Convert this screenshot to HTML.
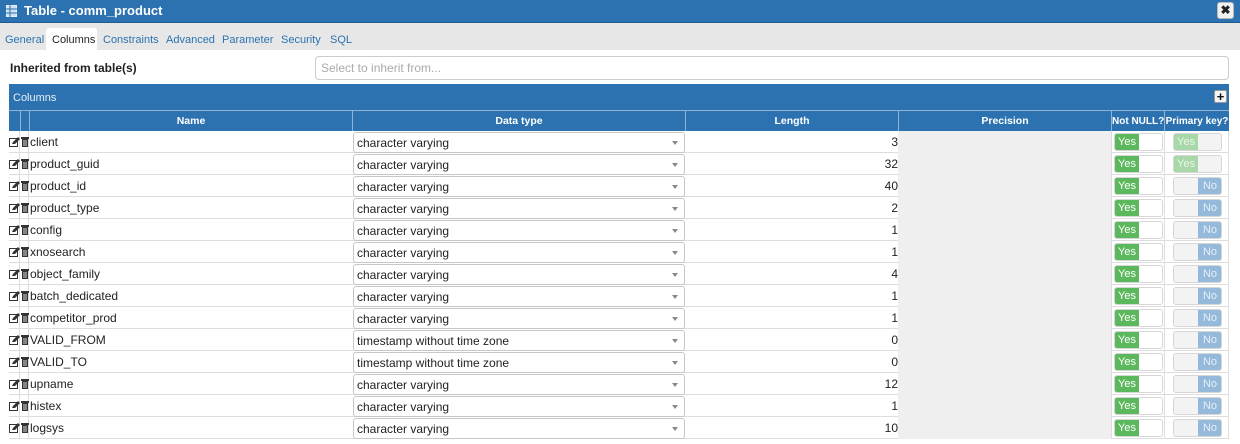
<!DOCTYPE html>
<html><head><style>
*{box-sizing:border-box;margin:0;padding:0}
body{width:1240px;height:444px;overflow:hidden;background:#fff;font-family:"Liberation Sans",Arial,sans-serif;font-size:12px;color:#333;position:relative}
.abs{position:absolute}
.title{left:0;top:0;width:1240px;height:23px;background:#2c72b0;color:#fff;font-weight:bold;font-size:13px;line-height:22px;padding-left:24px;border-bottom:1px solid #1f5a90}
.tabs{left:0;top:23px;width:1240px;height:27px;background:#e7e7e7}
.tab{position:absolute;top:5px;height:22px;font-size:11px;color:#2c72b0;line-height:24px;white-space:nowrap}
.tab.act{background:#fff;color:#222;border-radius:3px 3px 0 0;padding:0 6px;width:51px}
.row{position:absolute;left:9px;width:1220px;height:22px;border-bottom:1px solid #ddd}
.c{position:absolute;top:0;height:22px;line-height:23px}
.sel{position:absolute;left:344px;top:1px;width:332px;height:21px;border:1px solid #c7c7c7;border-radius:3px;background:#fff;padding-left:3px;line-height:20px;font-size:12px;color:#222}
.sel:after{content:"";position:absolute;right:6px;top:8px;border-left:3px solid transparent;border-right:3px solid transparent;border-top:4px solid #888}
.sw{position:absolute;top:2px;width:49px;height:18px;border:1px solid #d6d6d6;border-radius:3px;background:#fff;overflow:hidden;font-size:11px;line-height:16px;color:#fff}
.sw span{position:absolute;top:0;width:24px;height:16px;text-align:center}
.hd{position:absolute;top:0;height:20px;border-left:1px solid #8fb3d5;text-align:center;white-space:nowrap;overflow:hidden}
</style></head><body>
<div class="abs title">Table - comm_product</div>
<svg class="abs" style="left:6px;top:5px" width="11" height="12" viewBox="0 0 11 12"><rect x="0.5" y="0.5" width="10" height="11" fill="#cfe0f0" stroke="#e8f0f8"/><path d="M0 4h11M0 8h11M4 0v12" stroke="#2c72b0" stroke-width="1"/></svg>
<div class="abs" style="left:1217px;top:2px;width:17px;height:17px;background:#f1f1f1;border:1px solid #bbb;border-radius:3px;text-align:center;line-height:15px;font-size:12px;font-weight:bold;color:#222">✖</div>
<div class="abs tabs">
<div class="tab" style="left:5px">General</div>
<div class="tab act" style="left:46px">Columns</div>
<div class="tab" style="left:103px">Constraints</div>
<div class="tab" style="left:166px">Advanced</div>
<div class="tab" style="left:222px">Parameter</div>
<div class="tab" style="left:281px">Security</div>
<div class="tab" style="left:330px">SQL</div>
</div>
<div class="abs" style="left:10px;top:61px;font-weight:bold;font-size:12px;color:#222">Inherited from table(s)</div>
<div class="abs" style="left:315px;top:56px;width:914px;height:24px;border:1px solid #ccc;border-radius:4px;color:#aaa;padding-left:5px;line-height:23px">Select to inherit from...</div>
<div class="abs" style="left:9px;top:84px;width:1220px;height:26px;background:#2c72b0;color:#e8f0f8;line-height:28px;padding-left:4px;font-size:11px">Columns</div>
<div class="abs" style="left:1214px;top:90px;width:13px;height:13px;background:#f4f4f4;border:1px solid #999;border-radius:2px;text-align:center;line-height:11px;font-weight:bold;color:#111;font-size:13px">+</div>
<div class="abs" style="left:9px;top:110px;width:1220px;height:21px;background:#2c72b0;color:#fff;font-weight:bold;font-size:10.5px;line-height:21px;border-top:1px solid #8fb3d5">
<div class="abs" style="left:11px;top:0;height:20px;border-left:1px solid #8fb3d5"></div>
<div class="hd" style="left:20px;width:323px">Name</div>
<div class="hd" style="left:343px;width:333px">Data type</div>
<div class="hd" style="left:676px;width:213px">Length</div>
<div class="hd" style="left:889px;width:213px">Precision</div>
<div class="hd" style="left:1102px;width:53px;font-size:10px">Not NULL?</div>
<div class="hd" style="left:1155px;width:65px;font-size:10px">Primary key?</div>
</div>
<div id="rows"></div>
<script>
var d=[["client","character varying",3],["product_guid","character varying",32],["product_id","character varying",40],["product_type","character varying",2],["config","character varying",1],["xnosearch","character varying",1],["object_family","character varying",4],["batch_dedicated","character varying",1],["competitor_prod","character varying",1],["VALID_FROM","timestamp without time zone",0],["VALID_TO","timestamp without time zone",0],["upname","character varying",12],["histex","character varying",1],["logsys","character varying",10]];
var h="";
d.forEach(function(r,i){
var pk=i<2;
h+='<div class="row" style="top:'+(131+i*22)+'px">'+
'<div class="c" style="left:0;width:11px;border-right:1px solid #ddd"><svg style="position:absolute;left:0;top:6px" width="11" height="10" viewBox="0 0 11 10"><rect x="0.5" y="1.5" width="8" height="8" fill="none" stroke="#333"/><path d="M3 7l1-2 5-5 2 2-5 5z" fill="#333"/></svg></div>'+
'<div class="c" style="left:11px;width:9px;border-right:1px solid #ddd"><svg style="position:absolute;left:1px;top:6px" width="8" height="10" viewBox="0 0 8 10"><rect x="0" y="0" width="8" height="2" fill="#333"/><rect x="1" y="2" width="6" height="8" fill="#333"/><path d="M3 3v6M5 3v6" stroke="#fff" stroke-width=".8"/></svg></div>'+
'<div class="c" style="left:20px;width:323px;padding-left:1px;color:#222">'+r[0]+'</div>'+
'<div class="sel">'+r[1]+'</div>'+
'<div class="c" style="left:676px;width:213px;text-align:right;color:#222">'+r[2]+'</div>'+
'<div class="c" style="left:889px;width:213px;background:#efefef"></div>'+
'<div class="c" style="left:1102px;width:53px;border-left:1px solid #ddd"></div>'+
'<div class="sw" style="left:1105px"><span style="left:0;background:#5cb85c">Yes</span></div>'+
'<div class="c" style="left:1155px;width:65px;border-left:1px solid #ddd;border-right:1px solid #ddd"></div>'+
(pk?'<div class="sw" style="left:1164px;background:#f3f3f3"><span style="left:0;background:#a8d8a8;color:#eaf6ea">Yes</span></div>':
'<div class="sw" style="left:1164px;background:#f3f3f3"><span style="left:24px;background:#94b9da;color:#e6eff8">No</span></div>')+
'</div>';
});
document.getElementById("rows").innerHTML=h;
</script>
</body></html>
